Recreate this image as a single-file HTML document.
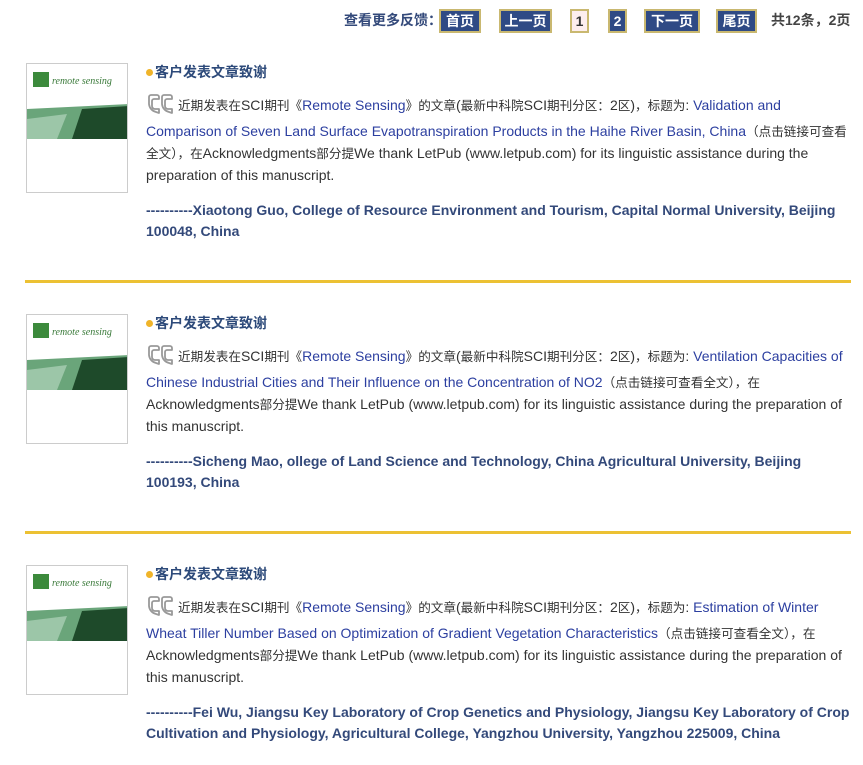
<!DOCTYPE html>
<html><head><meta charset="utf-8"><style>
*{margin:0;padding:0;box-sizing:border-box}
body{width:863px;height:765px;background:#fff;position:relative;overflow:hidden;font-family:"Liberation Sans","Noto Sans CJK SC",sans-serif;font-size:14px;color:#333}
.pg{position:absolute;top:9px;height:24px;line-height:22px;font-weight:bold;font-size:14px}
.b{position:absolute;top:9px;height:24px;line-height:20px;background:#2f4a85;border:2px solid #c9b870;color:#fff;text-align:center;font-weight:bold;font-size:14px}
.blk{position:absolute;left:0;width:863px;height:251px}
.img{position:absolute;left:26px;top:63px;width:102px;height:130px;border:1px solid #ccc;background:#fff;overflow:hidden}
.t{position:absolute;left:146px;top:63px;font-weight:bold;color:#2d4a7a;font-size:14px;line-height:18px}
.t i{display:inline-block;width:7px;height:7px;border-radius:50%;background:#f0b429;margin-right:2px;vertical-align:1px}
.p{position:absolute;left:146px;top:92px;width:710px;line-height:21px;white-space:nowrap;color:#333}
.p a{color:#2c3fa0;text-decoration:none}
.p s{text-decoration:none;font-size:12.6px}
.au{position:absolute;left:146px;top:200px;line-height:21px;font-weight:bold;color:#33497a;white-space:nowrap}
.sep{position:absolute;left:25px;top:280px;width:826px;height:3px;background:#ecc133}
.q{display:inline-block;vertical-align:-6px;margin-right:2px}
.l1{line-height:27px;height:29px}
</style></head><body>
<div class="pg" style="left:344px;color:#33497a">查看更多反馈：</div>
<div class="b" style="left:439px;width:42px">首页</div>
<div class="b" style="left:499px;width:53px">上一页</div>
<div class="b" style="left:570px;width:19px;background:#fdeeee;color:#333">1</div>
<div class="b" style="left:608px;width:19px">2</div>
<div class="b" style="left:644px;width:56px">下一页</div>
<div class="b" style="left:716px;width:41px">尾页</div>
<div class="pg" style="left:771px;color:#444">共12条，2页</div>

<div class="blk" style="top:0">
<div class="img"><svg width="102" height="130"><rect x="6" y="8" width="16" height="15" fill="#3c8a3c"/><text x="25" y="20" font-family="Liberation Serif" font-style="italic" font-size="10" fill="#3a7a3a">remote sensing</text><polygon points="0,45 102,40 102,75 0,75" fill="#6aa57a"/><polygon points="55,45 102,42 102,75 45,75" fill="#1e4a2a"/><polygon points="0,55 40,50 30,75 0,75" fill="#9cc6a8"/></svg></div>
<div class="t"><i></i>客户发表文章致谢</div>
<div class="p"><div class="l1"><svg class="q" width="30" height="24" viewBox="0 0 30 24"><path d="M5 3h6a2 2 0 0 1 2 2v2H8a2 2 0 0 0-2 2v5a3 3 0 0 0 3 3h4v4l-3-1a9 9 0 0 1-7-8V5a2 2 0 0 1 2-2z M18 3h6a2 2 0 0 1 2 2v2h-5a2 2 0 0 0-2 2v5a3 3 0 0 0 3 3h4v4l-3-1a9 9 0 0 1-7-8V5a2 2 0 0 1 2-2z" fill="none" stroke="#999" stroke-width="1.8" stroke-linejoin="round"/></svg><s>近期发表在</s>SCI<s>期刊《</s><a>Remote Sensing</a><s>》的文章</s>(<s>最新中科院</s>SCI<s>期刊分区：</s>2<s>区</s>)<s>，标题为</s>: <a>Validation and</a></div>
<a>Comparison of Seven Land Surface Evapotranspiration Products in the Haihe River Basin, China</a><s>（点击链接可查看</s><br><s>全文），在</s>Acknowledgments<s>部分提</s>We thank LetPub (www.letpub.com) for its linguistic assistance during the<br>preparation of this manuscript.</div>
<div class="au">----------Xiaotong Guo, College of Resource Environment and Tourism, Capital Normal University, Beijing<br>100048, China</div>
<div class="sep"></div>
</div>

<div class="blk" style="top:251px">
<div class="img"><svg width="102" height="130"><rect x="6" y="8" width="16" height="15" fill="#3c8a3c"/><text x="25" y="20" font-family="Liberation Serif" font-style="italic" font-size="10" fill="#3a7a3a">remote sensing</text><polygon points="0,45 102,40 102,75 0,75" fill="#6aa57a"/><polygon points="55,45 102,42 102,75 45,75" fill="#1e4a2a"/><polygon points="0,55 40,50 30,75 0,75" fill="#9cc6a8"/></svg></div>
<div class="t"><i></i>客户发表文章致谢</div>
<div class="p"><div class="l1"><svg class="q" width="30" height="24" viewBox="0 0 30 24"><path d="M5 3h6a2 2 0 0 1 2 2v2H8a2 2 0 0 0-2 2v5a3 3 0 0 0 3 3h4v4l-3-1a9 9 0 0 1-7-8V5a2 2 0 0 1 2-2z M18 3h6a2 2 0 0 1 2 2v2h-5a2 2 0 0 0-2 2v5a3 3 0 0 0 3 3h4v4l-3-1a9 9 0 0 1-7-8V5a2 2 0 0 1 2-2z" fill="none" stroke="#999" stroke-width="1.8" stroke-linejoin="round"/></svg><s>近期发表在</s>SCI<s>期刊《</s><a>Remote Sensing</a><s>》的文章</s>(<s>最新中科院</s>SCI<s>期刊分区：</s>2<s>区</s>)<s>，标题为</s>: <a>Ventilation Capacities of</a></div>
<a>Chinese Industrial Cities and Their Influence on the Concentration of NO2</a><s>（点击链接可查看全文），在</s><br>Acknowledgments<s>部分提</s>We thank LetPub (www.letpub.com) for its linguistic assistance during the preparation of<br>this manuscript.</div>
<div class="au">----------Sicheng Mao, ollege of Land Science and Technology, China Agricultural University, Beijing<br>100193, China</div>
<div class="sep"></div>
</div>

<div class="blk" style="top:502px">
<div class="img"><svg width="102" height="130"><rect x="6" y="8" width="16" height="15" fill="#3c8a3c"/><text x="25" y="20" font-family="Liberation Serif" font-style="italic" font-size="10" fill="#3a7a3a">remote sensing</text><polygon points="0,45 102,40 102,75 0,75" fill="#6aa57a"/><polygon points="55,45 102,42 102,75 45,75" fill="#1e4a2a"/><polygon points="0,55 40,50 30,75 0,75" fill="#9cc6a8"/></svg></div>
<div class="t"><i></i>客户发表文章致谢</div>
<div class="p"><div class="l1"><svg class="q" width="30" height="24" viewBox="0 0 30 24"><path d="M5 3h6a2 2 0 0 1 2 2v2H8a2 2 0 0 0-2 2v5a3 3 0 0 0 3 3h4v4l-3-1a9 9 0 0 1-7-8V5a2 2 0 0 1 2-2z M18 3h6a2 2 0 0 1 2 2v2h-5a2 2 0 0 0-2 2v5a3 3 0 0 0 3 3h4v4l-3-1a9 9 0 0 1-7-8V5a2 2 0 0 1 2-2z" fill="none" stroke="#999" stroke-width="1.8" stroke-linejoin="round"/></svg><s>近期发表在</s>SCI<s>期刊《</s><a>Remote Sensing</a><s>》的文章</s>(<s>最新中科院</s>SCI<s>期刊分区：</s>2<s>区</s>)<s>，标题为</s>: <a>Estimation of Winter</a></div>
<a>Wheat Tiller Number Based on Optimization of Gradient Vegetation Characteristics</a><s>（点击链接可查看全文），在</s><br>Acknowledgments<s>部分提</s>We thank LetPub (www.letpub.com) for its linguistic assistance during the preparation of<br>this manuscript.</div>
<div class="au">----------Fei Wu, Jiangsu Key Laboratory of Crop Genetics and Physiology, Jiangsu Key Laboratory of Crop<br>Cultivation and Physiology, Agricultural College, Yangzhou University, Yangzhou 225009, China</div>
</div>
</body></html>
